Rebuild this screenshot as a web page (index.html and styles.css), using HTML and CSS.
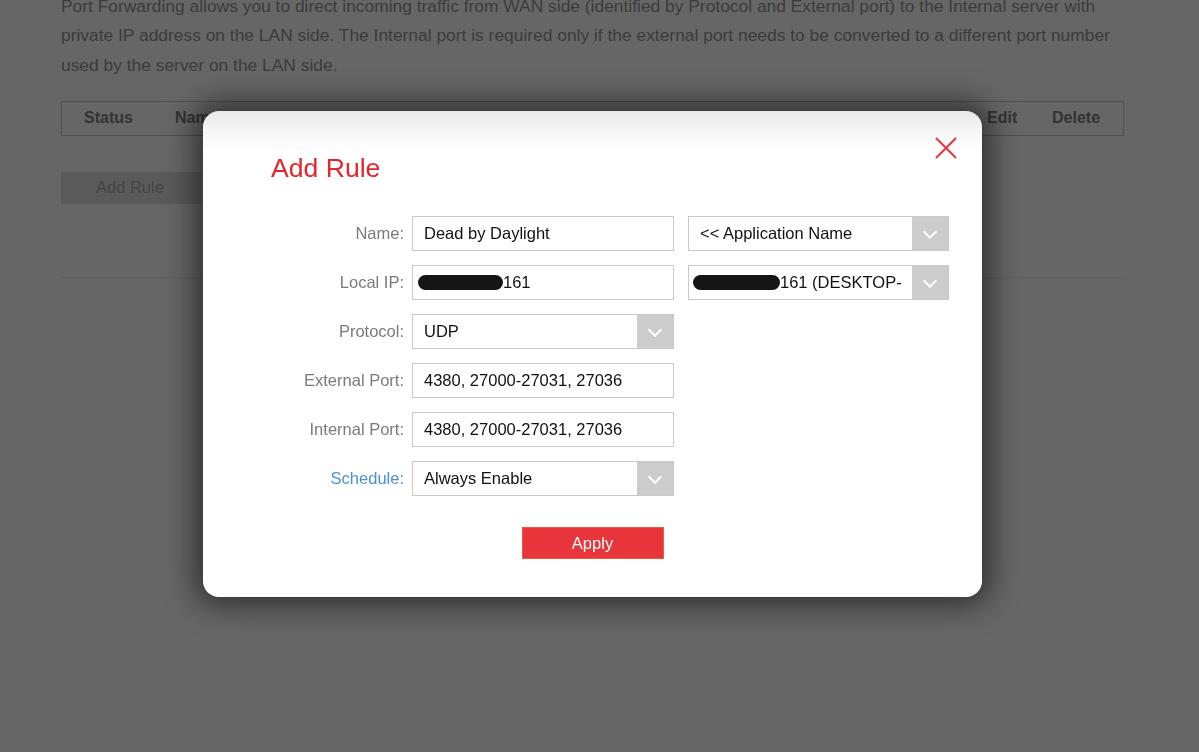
FILE: index.html
```html
<!DOCTYPE html>
<html lang="en">
<head>
  <meta charset="UTF-8" />
  <title>Port Forwarding</title>
  <link rel="stylesheet" href="styles.css">
</head>
<body>
  <div class="page">
    <p class="intro">Port Forwarding allows you to direct incoming traffic from WAN side (identified by Protocol and External port) to the Internal server with private IP address on the LAN side. The Internal port is required only if the external port needs to be converted to a different port number used by the server on the LAN side.</p>

    <div class="rule-table">
      <span class="c-status">Status</span>
      <span class="c-name">Name</span>
      <span class="c-ip">Local IP</span>
      <span class="c-proto">Protocol</span>
      <span class="c-ext">External Port</span>
      <span class="c-int">Internal Port</span>
      <span class="c-sched">Schedule</span>
      <span class="c-edit">Edit</span>
      <span class="c-del">Delete</span>
    </div>

    <button class="add-btn" type="button">Add Rule</button>
    <div class="divider"></div>
  </div>

  <div class="overlay">
    <div class="modal">
      <button class="close" type="button" aria-label="Close">
        <svg width="22" height="22" viewBox="0 0 22 22"><path d="M1 1 L21 21 M21 1 L1 21" stroke="#e8353b" stroke-width="2" fill="none"/></svg>
      </button>
      <h2 class="title">Add Rule</h2>

      <div class="form">
        <label>Name:</label>
        <div class="field">Dead by Daylight</div>
        <div class="field select">&lt;&lt; Application Name<span class="arrow"></span></div>

        <label>Local IP:</label>
        <div class="field"><span class="blot"></span>161</div>
        <div class="field select slim"><span class="blot"></span>161 (DESKTOP-<span class="arrow"></span></div>

        <label>Protocol:</label>
        <div class="field select">UDP<span class="arrow"></span></div>
        <div></div>

        <label>External Port:</label>
        <div class="field">4380, 27000-27031, 27036</div>
        <div></div>

        <label>Internal Port:</label>
        <div class="field">4380, 27000-27031, 27036</div>
        <div></div>

        <label class="link">Schedule:</label>
        <div class="field select">Always Enable<span class="arrow"></span></div>
        <div></div>
      </div>

      <button class="apply" type="button">Apply</button>
    </div>
  </div>
</body>
</html>
```

FILE: styles.css
```css
body {
  margin: 0;
  background: #666;
  font-family: "Liberation Sans", Arial, sans-serif;
  font-size: 16px;
  overflow: hidden;
}

.page {
  margin: -8px 75px 0 61px;
  width: 1063px;
}

.intro {
  margin: 0;
  color: #3b3b3b;
  font-size: 17.4px;
  line-height: 29.3px;
}

.rule-table {
  display: grid;
  grid-template-columns: 91px 110px 130px 110px 150px 150px 162px 65px 1fr;
  margin-top: 21px;
  height: 35px;
  box-sizing: border-box;
  padding-left: 22px;
  align-items: center;
  border: 1px solid #4e4e4e;
  color: #333;
  font-weight: bold;
}

.add-btn {
  display: block;
  margin-top: 36px;
  width: 140px;
  height: 32px;
  padding: 0 0 0 4px;
  border: none;
  background: #5a5a5a;
  color: #444;
  font-family: inherit;
  font-size: 16.5px;
  text-align: left;
  text-indent: 31px;
}

.divider {
  margin-top: 73px;
  border-top: 1px solid #5e5e5e;
}

.overlay {
  position: fixed;
  inset: 0;
  padding: 111px 0 0 203px;
}

.modal {
  position: relative;
  width: 779px;
  height: 486px;
  box-sizing: border-box;
  padding: 42px 0 0 0;
  border-radius: 16px;
  background: linear-gradient(#e8e8e8 0, #f6f6f6 20px, #fff 42px);
  box-shadow: 0 0 30px 8px rgba(0, 0, 0, 0.55);
}

.close {
  position: absolute;
  top: 26px;
  right: 25px;
  padding: 0;
  border: none;
  background: none;
  line-height: 0;
}

.title {
  margin: 0 0 33px 68px;
  color: #e3262e;
  font-size: 26.6px;
  font-weight: normal;
  line-height: 30px;
}

.form {
  display: grid;
  grid-template-columns: 201px 262px 267px;
  column-gap: 8px;
  row-gap: 14px;
  align-items: center;
  font-size: 16.5px;
}

.form > div:nth-child(3n) {
  margin-left: 6px;
}

.form label {
  text-align: right;
  color: #7a7a7a;
}

.form label.link {
  color: #4a90d9;
}

.field {
  position: relative;
  display: flex;
  align-items: center;
  height: 35px;
  box-sizing: border-box;
  padding-left: 11px;
  border: 1px solid #c8c8c8;
  color: #111;
  white-space: nowrap;
}

.field.slim {
  padding-left: 4px;
}

.field.select {
  padding-right: 40px;
}

.arrow {
  position: absolute;
  top: 0;
  right: 0;
  width: 36px;
  height: 33px;
  background: #cccccc;
}

.arrow::after {
  content: "";
  position: absolute;
  left: 13px;
  top: 10px;
  width: 8px;
  height: 8px;
  border-right: 2px solid #fff;
  border-bottom: 2px solid #fff;
  transform: rotate(45deg);
}

.blot {
  display: inline-block;
  width: 85px;
  height: 15px;
  margin-left: -6px;
  border-radius: 8px;
  background: #151515;
}

.field.slim .blot {
  margin-left: 0;
  width: 87px;
}

.apply {
  display: block;
  margin: 31px auto 0;
  width: 142px;
  height: 32px;
  border: 1px solid #f0593e;
  background: #e8343b;
  color: #fff;
  font-family: inherit;
  font-size: 16.5px;
}
```
